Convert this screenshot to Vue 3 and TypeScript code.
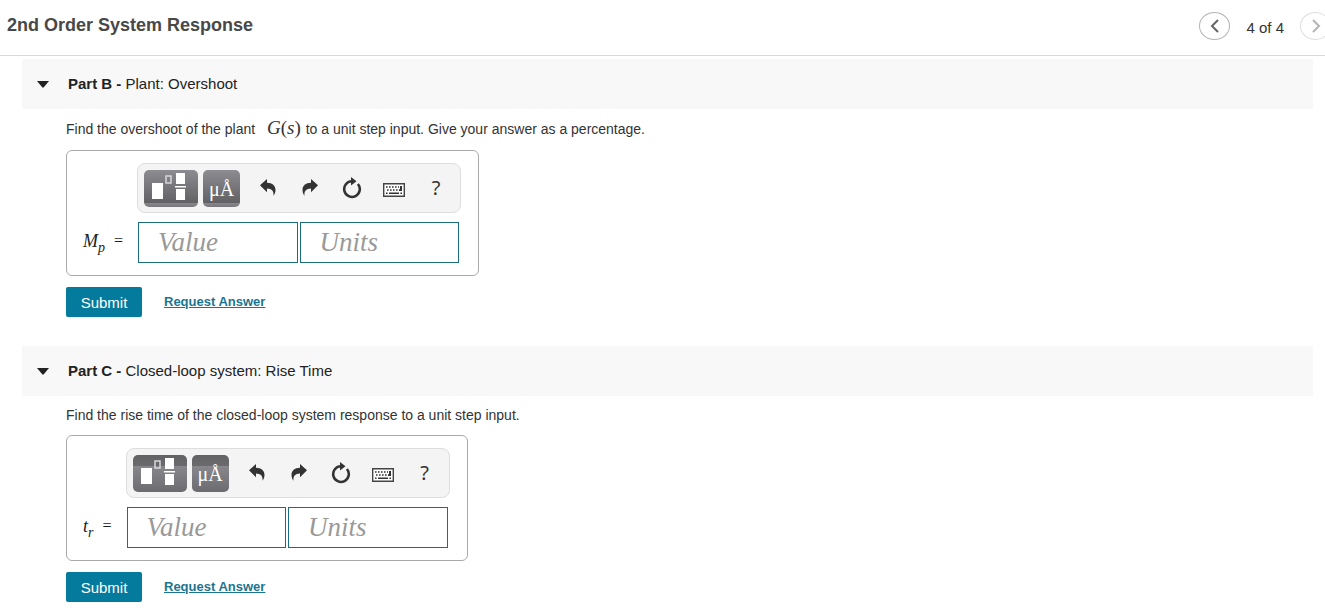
<script setup lang="ts">
import { reactive } from 'vue'

interface Part {
  id: string
  name: string
  title: string
  before: string
  math?: string
  after?: string
  symbol: string
  subscript: string
  value: string
  units: string
  open: boolean
}

const parts = reactive<Part[]>([
  {
    id: 'b',
    name: 'Part B',
    title: 'Plant: Overshoot',
    before: 'Find the overshoot of the plant',
    math: 's',
    after: 'to a unit step input. Give your answer as a percentage.',
    symbol: 'M',
    subscript: 'p',
    value: '',
    units: '',
    open: true,
  },
  {
    id: 'c',
    name: 'Part C',
    title: 'Closed-loop system: Rise Time',
    before: 'Find the rise time of the closed-loop system response to a unit step input.',
    symbol: 't',
    subscript: 'r',
    value: '',
    units: '',
    open: true,
  },
])

function reset(part: Part) {
  part.value = ''
  part.units = ''
}
</script>

<template>
  <div class="page">
    <header class="top">
      <h1>2nd Order System Response</h1>
      <nav class="pager" aria-label="Item navigation">
        <button type="button" class="round" aria-label="Previous item">
          <svg width="10" height="14" viewBox="0 0 10 14"><path d="M8 1 2 7 8 13" /></svg>
        </button>
        <span class="count">4 of 4</span>
        <button type="button" class="round" aria-label="Next item" disabled>
          <svg width="10" height="14" viewBox="0 0 10 14"><path d="M2 1 8 7 2 13" /></svg>
        </button>
      </nav>
    </header>

    <main>
      <section v-for="part in parts" :key="part.id" class="part">
        <div class="part-head">
          <button
            type="button"
            class="caret"
            :aria-label="'Toggle ' + part.name"
            :aria-expanded="part.open"
            @click="part.open = !part.open"
          >
            <svg width="12" height="7" viewBox="0 0 12 7"><path d="M0 0h12L6.8 6.3q-.8.8-1.6 0z" /></svg>
          </button>
          <h2><b>{{ part.name }} -</b> {{ part.title }}</h2>
        </div>

        <form v-if="part.open" class="body" @submit.prevent>
          <p>
            {{ part.before }}
            <span v-if="part.math" class="math"><i>G</i>(<i>{{ part.math }}</i>)</span>
            {{ part.after }}
          </p>

          <div class="answer">
            <div class="tools" :class="'tools-' + part.id">
              <button type="button" class="dark templates" aria-label="Templates">
                <svg width="38" height="30" viewBox="0 0 38 30">
                  <path class="fill" d="M0 10h11v16H0zM24 0h9v11h-9zM24 16h9v11h-9zM23 13h11v1.500H23z" />
                  <path class="line" d="M14 3h5v7h-5z" />
                </svg>
              </button>
              <button type="button" class="dark symbols" aria-label="Symbols">μÅ</button>
              <div class="actions">
                <button type="button" aria-label="Undo">
                  <svg width="16" height="19" viewBox="0 0 16 19">
                    <path d="M0 6.200 7 0v3.800c5.500.2 8.500 3 8.500 7.200 0 2.200-.8 4.300-2 5.700.5-4.400-1.500-7-6.500-7.100v3.600z" />
                  </svg>
                </button>
                <button type="button" aria-label="Redo">
                  <svg width="16" height="19" viewBox="0 0 16 19">
                    <path d="M16 6.200 9 0v3.800C3.500 4 .5 6.800.5 11c0 2.200.8 4.300 2 5.700C2 12.300 4 9.700 9 9.600v3.600z" />
                  </svg>
                </button>
                <button type="button" aria-label="Reset" @click="reset(part)">
                  <svg width="20" height="22" viewBox="0 0 20 22">
                    <path class="ring" d="M10 4.300A7.800 7.800 0 1 0 15.900 7" />
                    <path d="M9 0l5.500 4.300L9 8.600z" />
                  </svg>
                </button>
                <button type="button" class="keys" aria-label="Keyboard shortcuts">
                  <svg width="22" height="14" viewBox="0 0 22 14">
                    <path class="frame" d="M.7.700h20.600v12.600H.7z" />
                    <path class="dots" d="M3 4h13M4 7h12" />
                    <path d="M17 3h2v5h-3V6.300h1zM3 9.500h1.600v1.600H3zM6 9.500h10v1.600H6zM17.400 9.500H19v1.600h-1.600z" />
                  </svg>
                </button>
                <button type="button" class="help" aria-label="Help">?</button>
              </div>
            </div>

            <label class="var" :for="'value-' + part.id">
              <span><i>{{ part.symbol }}</i><sub>{{ part.subscript }}</sub></span>
              <span class="eq">=</span>
            </label>
            <div class="fields">
              <input :id="'value-' + part.id" v-model="part.value" type="text" placeholder="Value" />
              <input v-model="part.units" type="text" placeholder="Units" :aria-label="part.name + ' units'" />
            </div>
          </div>

          <div class="submit-row">
            <button type="submit" class="submit">Submit</button>
            <a href="#">Request Answer</a>
          </div>
        </form>
      </section>
    </main>
  </div>
</template>

<style>
body {
  margin: 0;
  background: #fff;
}
</style>

<style scoped>
.page {
  font-family: "Liberation Sans", Arial, sans-serif;
  color: #222;
  overflow: hidden;
}
button {
  font: inherit;
  color: inherit;
  padding: 0;
  border: 0;
  background: none;
  cursor: pointer;
}
svg {
  display: block;
}
.top {
  display: flex;
  justify-content: space-between;
  align-items: center;
  height: 55px;
  padding-left: 7px;
  border-bottom: 1px solid #d9d9d9;
}
h1 {
  margin: 0;
  padding-bottom: 5px;
  font-size: 18px;
  line-height: 24px;
  color: #484848;
}
.pager {
  display: flex;
  align-items: center;
  gap: 16px;
  margin-right: -6px;
  padding-bottom: 3px;
}
.round {
  display: flex;
  align-items: center;
  justify-content: center;
  box-sizing: border-box;
  width: 31px;
  height: 28px;
  border: 1px solid #b4b4b4;
  border-radius: 50%;
}
.round path {
  fill: none;
  stroke: #666;
  stroke-width: 2;
}
.round:disabled {
  border-color: #ddd;
}
.round:disabled path {
  stroke: #b5b5b5;
}
.count {
  padding-top: 3px;
  font-size: 15px;
  line-height: 20px;
  color: #333;
}
main {
  padding: 3px 12px 0 22px;
}
.part {
  margin-bottom: 29px;
}
.part:last-child {
  margin-bottom: 0;
}
.part-head {
  display: flex;
  align-items: center;
  height: 50px;
  background: #f8f8f8;
}
.caret {
  display: flex;
  align-items: center;
  justify-content: center;
  width: 42px;
  height: 30px;
  margin-right: 4px;
}
.caret path {
  fill: #222;
}
h2 {
  margin: 0;
  font-size: 15px;
  line-height: 20px;
  font-weight: 400;
}
.body {
  padding: 9px 0 0 44px;
}
p {
  margin: 0 0 10px;
  font-size: 14px;
  line-height: 20px;
  color: #333;
}
.math {
  display: inline-block;
  margin: 0 1px 0 8px;
  padding-bottom: 2px;
  font-family: "Liberation Serif", serif;
  font-size: 19px;
  line-height: 20px;
}
.answer {
  display: grid;
  grid-template-columns: auto auto;
  width: fit-content;
  row-gap: 9px;
  padding: 12px 17px 12px 16px;
  border: 1px solid #aaa;
  border-radius: 6px;
}
.tools {
  grid-column: 2;
  display: flex;
  align-items: center;
  gap: 5px;
  box-sizing: border-box;
  height: 50px;
  padding: 0 3px 0 6px;
  border: 1px solid #ddd;
  border-radius: 8px;
  background: #f4f4f4;
}
.dark {
  display: flex;
  align-items: center;
  justify-content: center;
  width: 54px;
  height: 37px;
  border-radius: 5px;
  color: #fff;
  background: linear-gradient(#8d8c91, #626164 88%, #88878c 89%, #78777c);
}
.tools-c .dark {
  background: linear-gradient(#626163, #6b6a6d 29%, #88878c 30%, #6c6b6f);
}
.dark .fill {
  fill: #fff;
}
.dark .line {
  fill: none;
  stroke: #d8d8da;
  stroke-width: 1.5;
}
.dark.symbols {
  box-sizing: border-box;
  width: 37px;
  padding-top: 3px;
  font-family: "Liberation Serif", serif;
  font-size: 20px;
}
.actions {
  display: flex;
  align-items: center;
  margin-left: 2px;
}
.actions button {
  display: flex;
  align-items: center;
  justify-content: center;
  width: 42px;
  height: 36px;
}
.actions path {
  fill: #333;
}
.actions .ring {
  fill: none;
  stroke: #333;
  stroke-width: 2.6;
}
.actions .frame {
  fill: #fff;
  stroke: #444;
  stroke-width: 1.4;
}
.actions .dots {
  stroke: #333;
  stroke-width: 1.6;
  stroke-dasharray: 1.6 1.4;
}
.actions .keys {
  padding-top: 4px;
}
.actions .help {
  font-family: "Noto Sans", sans-serif;
  font-size: 20px;
  line-height: 24px;
  color: #333;
}
.var {
  display: flex;
  align-items: center;
  gap: 9px;
  padding: 0 14px 4px 0;
  font-family: "Liberation Serif", serif;
  font-size: 18px;
  line-height: 24px;
}
.var sub {
  font-size: 14px;
  font-style: italic;
  line-height: 0;
}
.eq {
  font-size: 16px;
}
.fields {
  display: flex;
  gap: 2px;
  padding: 0 2px 0 1px;
}
input {
  box-sizing: border-box;
  flex: 1;
  width: 0;
  height: 41px;
  padding: 0 19px;
  border: 1px solid #1b6d85;
  border-radius: 0;
  background: #fff;
  font-family: "Liberation Serif", serif;
  font-size: 27px;
  color: #222;
}
input::placeholder {
  color: #999;
  font-style: italic;
  opacity: 1;
}
.submit-row {
  display: flex;
  align-items: center;
  gap: 22px;
  margin-top: 11px;
}
.submit {
  min-width: 76px;
  height: 30px;
  padding: 0 14px;
  border-radius: 2px;
  background: #047a9c;
  color: #fff;
  font-size: 15px;
}
a {
  font-size: 13px;
  font-weight: 700;
  line-height: 20px;
  color: #1b7590;
}
</style>
